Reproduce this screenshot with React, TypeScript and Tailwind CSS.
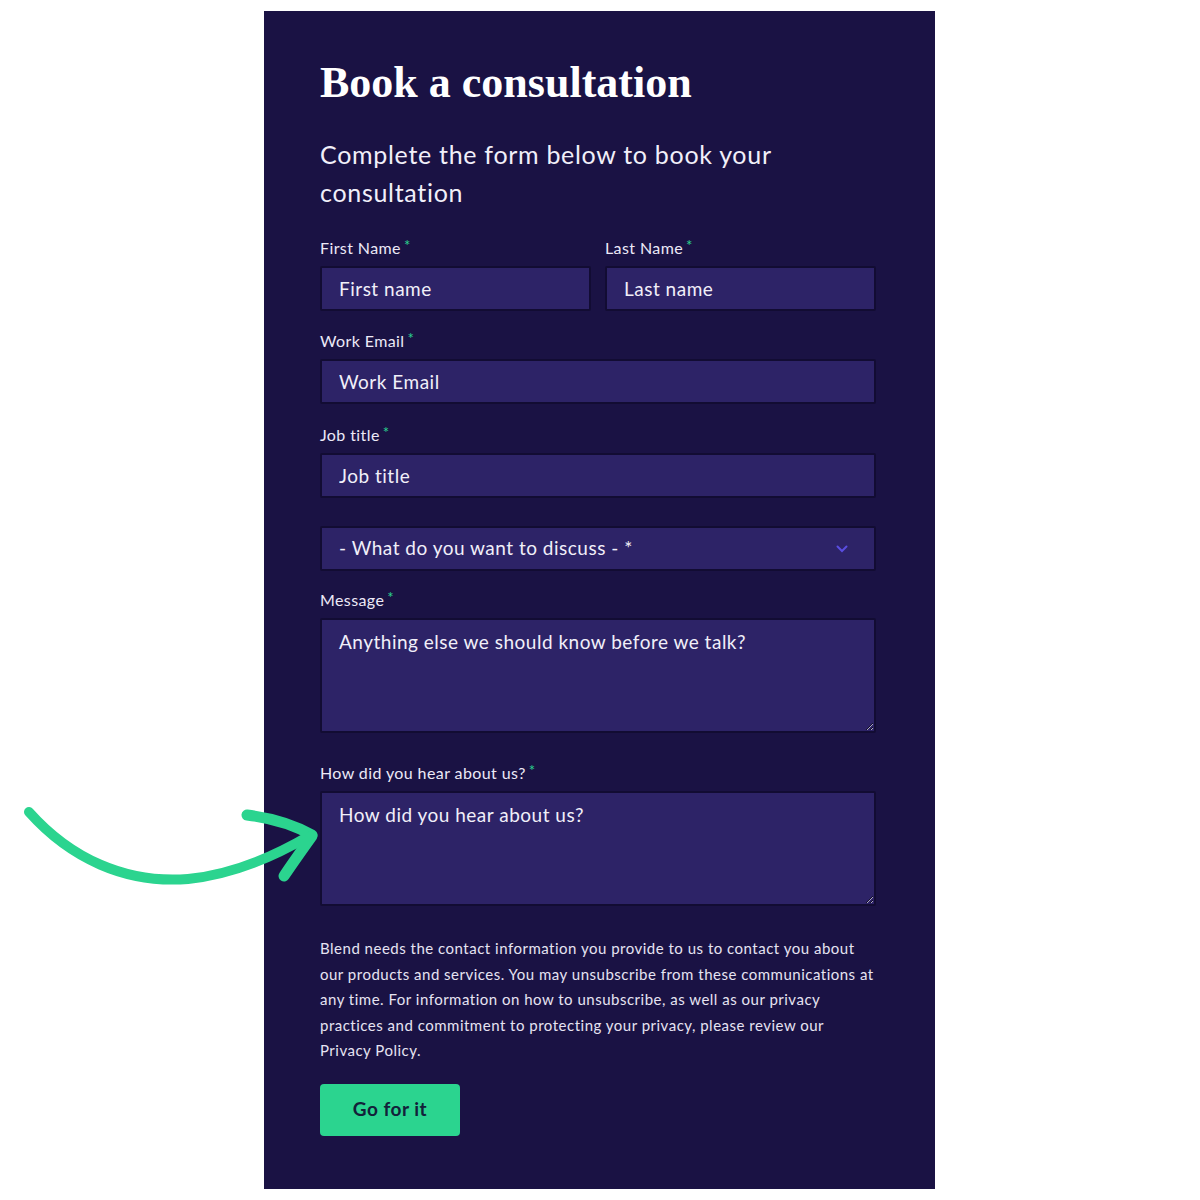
import React from "react"

const bodyFont = { fontFamily: "Lato, 'Noto Sans', sans-serif" }

function Label({ text }: { text: string }) {
  return (
    <label className="block h-[20px] text-[16px] leading-[20px] text-[#ece9f7] mb-[8px] tracking-[0.4px]">
      {text}
      <span className="relative top-[-3px] ml-[3px] text-[#2bd48f] text-[15px] leading-none">*</span>
    </label>
  )
}

const fieldCls =
  "w-full h-[45px] bg-[#2d2367] border-2 border-[#120c33] rounded-[2px] px-[17px] text-[19px] tracking-[0.5px] text-[#f1eff9] placeholder:text-[#f1eff9] outline-none"

const areaCls =
  "w-full h-[115px] bg-[#2d2367] border-2 border-[#120c33] rounded-[2px] px-[17px] pt-[8px] text-[19px] tracking-[0.5px] text-[#f1eff9] placeholder:text-[#f1eff9] outline-none resize-y block"

function Arrow() {
  return (
    <svg className="absolute left-0 top-[790px]" width="330" height="110" viewBox="0 790 330 110" fill="none">
      <path
        d="M29 812 C 70 858, 125 884, 188 879 C 238 874, 280 853, 309 836"
        stroke="#2bd48f"
        strokeWidth="10"
        strokeLinecap="round"
      />
      <path
        d="M247 815 C 272 818, 296 826, 312 835"
        stroke="#2bd48f"
        strokeWidth="11"
        strokeLinecap="round"
      />
      <path
        d="M312 836 C 302 850, 292 864, 284 876"
        stroke="#2bd48f"
        strokeWidth="11"
        strokeLinecap="round"
      />
    </svg>
  )
}

export default function App() {
  return (
    <div className="relative w-[1200px] h-[1200px] bg-white overflow-hidden" style={bodyFont}>
      <div className="ml-[264px] mt-[11px] w-[671px] h-[1178px] bg-[#1a1244] pl-[56px] pr-[59px] pt-[44px]">
        <h1
          className="text-[44px] leading-[56px] font-bold text-white"
          style={{ fontFamily: "'Liberation Serif', 'DejaVu Serif', serif" }}
        >
          Book a consultation
        </h1>
        <p className="mt-[24px] text-[25px] leading-[38px] text-[#f1eff9] tracking-[0.7px]">
          Complete the form below to book your
          <br />
          consultation
        </p>

        <form className="mt-[27px]">
          <div className="flex gap-[14px]">
            <div className="flex-1">
              <Label text="First Name" />
              <input className={fieldCls} placeholder="First name" />
            </div>
            <div className="flex-1">
              <Label text="Last Name" />
              <input className={fieldCls} placeholder="Last name" />
            </div>
          </div>

          <div className="mt-[20px]">
            <Label text="Work Email" />
            <input className={fieldCls} placeholder="Work Email" />
          </div>

          <div className="mt-[21px]">
            <Label text="Job title" />
            <input className={fieldCls} placeholder="Job title" />
          </div>

          <div className="mt-[28px] relative">
            <select className={fieldCls + " appearance-none"} defaultValue="">
              <option value="">- What do you want to discuss - *</option>
            </select>
            <svg
              className="absolute right-[28px] top-[19px]"
              width="12"
              height="8"
              viewBox="0 0 12 8"
              fill="none"
            >
              <path d="M1.5 1.5 L6 6 L10.5 1.5" stroke="#5a4de0" strokeWidth="2" strokeLinecap="round" />
            </svg>
          </div>

          <div className="mt-[19px]">
            <Label text="Message" />
            <textarea className={areaCls} placeholder="Anything else we should know before we talk?" />
          </div>

          <div className="mt-[30px]">
            <Label text="How did you hear about us?" />
            <textarea className={areaCls} placeholder="How did you hear about us?" />
          </div>

          <p className="mt-[30px] text-[15px] leading-[25.5px] text-[#e6e3f2] tracking-[0.5px] whitespace-nowrap">
            Blend needs the contact information you provide to us to contact you about
            <br />
            our products and services. You may unsubscribe from these communications at
            <br />
            any time. For information on how to unsubscribe, as well as our privacy
            <br />
            practices and commitment to protecting your privacy, please review our
            <br />
            Privacy Policy.
          </p>

          <button
            type="button"
            className="mt-[20px] w-[140px] h-[52px] rounded-[4px] bg-[#2bd48f] text-[#13213a] text-[19px] tracking-[0.5px] font-bold"
          >
            Go for it
          </button>
        </form>
      </div>
      <Arrow />
    </div>
  )
}
